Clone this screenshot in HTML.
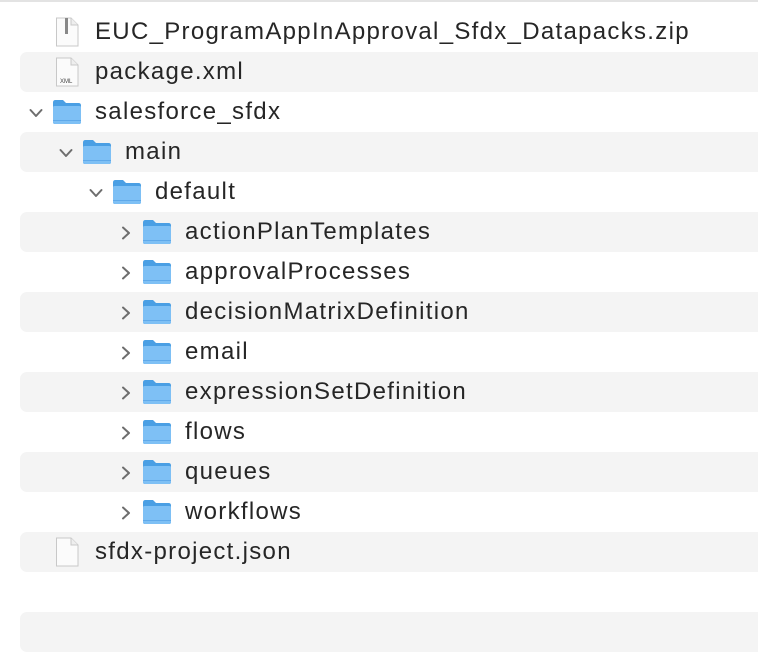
<!DOCTYPE html>
<html><head><style>
body{margin:0;width:758px;height:656px;background:#fff;position:relative;overflow:hidden;font-family:"Liberation Sans",Helvetica,sans-serif;}
.top{position:absolute;left:0;top:0;width:758px;height:2px;background:#e3e3e3}
.row{position:absolute;left:20px;width:760px;height:40px;border-radius:7px}
.g{background:#f4f4f4}
.t{position:absolute;font-size:24px;color:#262626;line-height:40px;white-space:nowrap;letter-spacing:1.3px}
.ic{position:absolute}
</style></head><body>
<div class="top"></div>
<div class="row g" style="top:52px"></div>
<div class="row g" style="top:132px"></div>
<div class="row g" style="top:212px"></div>
<div class="row g" style="top:292px"></div>
<div class="row g" style="top:372px"></div>
<div class="row g" style="top:452px"></div>
<div class="row g" style="top:532px"></div>
<div class="row g" style="top:612px"></div>

<svg width="0" height="0" style="position:absolute">
<defs>
<symbol id="fold" viewBox="0 0 30 26">
<path d="M1 3.5Q1 1 3.5 1H11L14 4H26.5Q29 4 29 6.5V23Q29 25 27 25H3Q1 25 1 23Z" fill="#4a9fe4"/>
<path d="M1 8.5Q1 7 2.5 7H27.5Q29 7 29 8.5V23Q29 25 27 25H3Q1 25 1 23Z" fill="#7ec0f5"/>
<rect x="1" y="21" width="28" height="1" fill="#5fa9ea"/>
</symbol>
<symbol id="chev" viewBox="0 0 14 14"><path d="M4 1.5L10 7L4 12.5" fill="none" stroke="#6e6e6e" stroke-width="2" stroke-linecap="round" stroke-linejoin="round"/></symbol>
<symbol id="doc" viewBox="0 0 24 30"><path d="M1.5 1H16L23 8V29H1.5Z" fill="#fbfbfb" stroke="#c8c8c8"/><path d="M16 1V8H23" fill="#eee" stroke="#c8c8c8"/></symbol>
</defs></svg>

<svg class="ic" style="left:55px;top:17px" width="24" height="30"><use href="#doc"/><rect x="10" y="1" width="3" height="16" fill="#888"/></svg>
<div class="t" style="left:95px;top:12px">EUC_ProgramAppInApproval_Sfdx_Datapacks.zip</div>
<svg class="ic" style="left:55px;top:57px" width="24" height="30"><use href="#doc"/><text x="5" y="26" font-size="6" fill="#444" font-family="Liberation Sans">XML</text></svg>
<div class="t" style="left:95px;top:52px">package.xml</div>
<svg class="ic" style="left:29px;top:106px;transform:rotate(90deg)" width="14" height="14"><use href="#chev"/></svg>
<svg class="ic" style="left:52px;top:99px" width="30" height="26"><use href="#fold"/></svg>
<div class="t" style="left:95px;top:92px">salesforce_sfdx</div>
<svg class="ic" style="left:59px;top:146px;transform:rotate(90deg)" width="14" height="14"><use href="#chev"/></svg>
<svg class="ic" style="left:82px;top:139px" width="30" height="26"><use href="#fold"/></svg>
<div class="t" style="left:125px;top:132px">main</div>
<svg class="ic" style="left:89px;top:186px;transform:rotate(90deg)" width="14" height="14"><use href="#chev"/></svg>
<svg class="ic" style="left:112px;top:179px" width="30" height="26"><use href="#fold"/></svg>
<div class="t" style="left:155px;top:172px">default</div>

<svg class="ic" style="left:119px;top:226px" width="14" height="14"><use href="#chev"/></svg>
<svg class="ic" style="left:142px;top:219px" width="30" height="26"><use href="#fold"/></svg>
<div class="t" style="left:185px;top:212px">actionPlanTemplates</div>
<svg class="ic" style="left:119px;top:266px" width="14" height="14"><use href="#chev"/></svg>
<svg class="ic" style="left:142px;top:259px" width="30" height="26"><use href="#fold"/></svg>
<div class="t" style="left:185px;top:252px">approvalProcesses</div>
<svg class="ic" style="left:119px;top:306px" width="14" height="14"><use href="#chev"/></svg>
<svg class="ic" style="left:142px;top:299px" width="30" height="26"><use href="#fold"/></svg>
<div class="t" style="left:185px;top:292px">decisionMatrixDefinition</div>
<svg class="ic" style="left:119px;top:346px" width="14" height="14"><use href="#chev"/></svg>
<svg class="ic" style="left:142px;top:339px" width="30" height="26"><use href="#fold"/></svg>
<div class="t" style="left:185px;top:332px">email</div>
<svg class="ic" style="left:119px;top:386px" width="14" height="14"><use href="#chev"/></svg>
<svg class="ic" style="left:142px;top:379px" width="30" height="26"><use href="#fold"/></svg>
<div class="t" style="left:185px;top:372px">expressionSetDefinition</div>
<svg class="ic" style="left:119px;top:426px" width="14" height="14"><use href="#chev"/></svg>
<svg class="ic" style="left:142px;top:419px" width="30" height="26"><use href="#fold"/></svg>
<div class="t" style="left:185px;top:412px">flows</div>
<svg class="ic" style="left:119px;top:466px" width="14" height="14"><use href="#chev"/></svg>
<svg class="ic" style="left:142px;top:459px" width="30" height="26"><use href="#fold"/></svg>
<div class="t" style="left:185px;top:452px">queues</div>
<svg class="ic" style="left:119px;top:506px" width="14" height="14"><use href="#chev"/></svg>
<svg class="ic" style="left:142px;top:499px" width="30" height="26"><use href="#fold"/></svg>
<div class="t" style="left:185px;top:492px">workflows</div>

<svg class="ic" style="left:55px;top:537px" width="24" height="30"><use href="#doc"/></svg>
<div class="t" style="left:95px;top:532px">sfdx-project.json</div>
</body></html>
